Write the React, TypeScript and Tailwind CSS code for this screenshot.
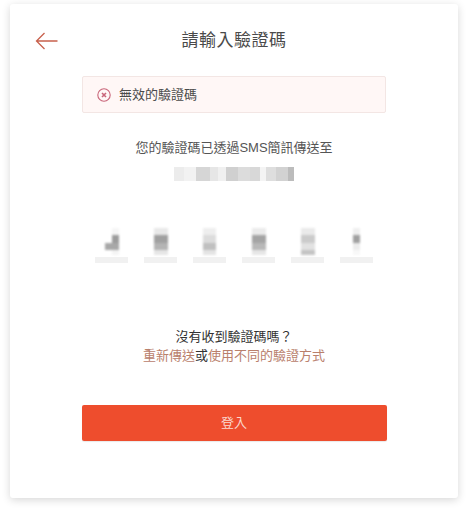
const font = { fontFamily: '"Liberation Sans", "Noto Sans CJK TC", sans-serif' };

// blurred digits of the code, one class string per band, top to bottom
const digits = [
  { w: "w-[14px]", rows: ["bg-[#f6f6f6] w-[7px] self-end", "bg-[#9c9c9c] w-[7px] self-end", "bg-[#a8a8a8] w-full", "bg-[#f4f4f4] w-[7px] self-end"] },
  { w: "w-[14px]", rows: ["bg-[#e8e8e8] w-full", "bg-[#a0a0a0] w-full", "bg-[#b4b4b4] w-full", "bg-[#e6e6e6] w-full"] },
  { w: "w-[13px]", rows: ["bg-[#eeeeee] w-full", "bg-[#dcdcdc] w-full", "bg-[#c0c0c0] w-full", "bg-[#e4e4e4] w-full"] },
  { w: "w-[14px]", rows: ["bg-[#ebebeb] w-full", "bg-[#a4a4a4] w-full", "bg-[#b8b8b8] w-full", "bg-[#e6e6e6] w-full"] },
  { w: "w-[14px]", rows: ["bg-[#eaeaea] w-full", "bg-[#cbcbcb] w-full", "bg-[#e2e2e2] w-full", "bg-[#c4c4c4] w-full"] },
  { w: "w-[7px]", rows: ["bg-[#efefef] w-full", "bg-[#a0a0a0] w-full", "bg-[#ececec] w-full", "bg-[#f8f8f8] w-full"] },
];

const rowHeights = ["h-[7px]", "h-[8px]", "h-[7px]", "h-[5px]"];

const phoneBlocks = [
  "bg-[#ececec] w-[10px]",
  "bg-[#f2f2f2] w-[12px]",
  "bg-[#d6d6d6] w-[14px]",
  "bg-[#e6e6e6] w-[8px]",
  "bg-[#f0f0f0] w-[8px]",
  "bg-[#d0d0d0] w-[12px]",
  "bg-[#dcdcdc] w-[12px]",
  "bg-[#d8d8d8] w-[10px]",
  "bg-[#f4f4f4] w-[6px]",
  "bg-[#dedede] w-[10px]",
  "bg-[#d2d2d2] w-[12px]",
  "bg-[#bcbcbc] w-[6px]",
];

export default function App() {
  return (
    <div className="w-[474px] h-[513px] bg-white pl-[10px] pt-[4px] overflow-hidden" style={font}>
      <div className="w-[448px] h-[494px] bg-white rounded-[3px] shadow-[0_2px_8px_rgba(0,0,0,0.16)] flex flex-col items-center">
        {/* Header */}
        <div className="w-full h-[72px] px-6 flex items-center relative">
          <svg className="absolute left-[25px] top-[28px]" width="23" height="18" viewBox="0 0 23 18" fill="none" stroke="#c8604c" strokeWidth="1.3">
            <path d="M22.5 9H1.5M9.5 1L1.5 9L9.5 17" />
          </svg>
          <h1 className="w-full text-center text-[17px] leading-[24px] tracking-[0.5px] text-[#4a4a4a] font-normal pt-[1px]">
            請輸入驗證碼
          </h1>
        </div>

        {/* Error */}
        <div className="w-[304px] h-[37px] bg-[#fff7f6] border border-[#f3e6e4] rounded-[2px] flex items-center pl-[14px] gap-[8px] shrink-0">
          <svg width="14" height="14" viewBox="0 0 14 14" fill="none" stroke="#c9667a">
            <circle cx="7" cy="7" r="6.2" strokeWidth="1.1" />
            <path d="M5 5L9 9M9 5L5 9" strokeWidth="1.6" />
          </svg>
          <span className="text-[13px] leading-4 text-[#4a4a4a]">無效的驗證碼</span>
        </div>

        {/* Sent to */}
        <p className="mt-[25px] text-[13px] leading-[20px] text-[#555555]">您的驗證碼已透過SMS簡訊傳送至</p>
        <div className="mt-[9px] h-[14px] flex blur-[0.6px]">
          {phoneBlocks.map((b, i) => (
            <div key={i} className={`h-full ${b}`} />
          ))}
        </div>

        {/* Code */}
        <div className="mt-[47px] flex gap-[16px]">
          {digits.map((d, i) => (
            <div key={i} className="w-[33px] flex flex-col items-center">
              <div className={`${d.w} flex flex-col blur-[0.8px]`}>
                {d.rows.map((r, j) => (
                  <div key={j} className={`${rowHeights[j]} ${r}`} />
                ))}
              </div>
              <div className="w-full h-[6px] mt-[2px] bg-[#f1f1f1] blur-[0.6px]" />
            </div>
          ))}
        </div>

        {/* Resend */}
        <p className="mt-[64px] text-[13px] leading-[19px] text-[#333333]">沒有收到驗證碼嗎？</p>
        <p className="text-[13px] leading-[19px] text-[#333333]">
          <span className="text-[#b9806c]">重新傳送</span>或<span className="text-[#b9806c]">使用不同的驗證方式</span>
        </p>

        {/* Submit */}
        <button className="mt-[40px] w-[305px] h-[36px] bg-[#ee4d2d] rounded-[2px] text-[13px] text-[#fbd9cf] shadow-[0_1px_1px_rgba(0,0,0,0.09)]">
          登入
        </button>
      </div>
    </div>
  );
}
